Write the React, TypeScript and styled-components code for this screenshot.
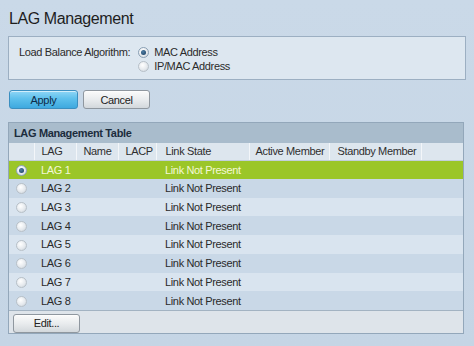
import React from "react";
import styled, { createGlobalStyle } from "styled-components";

const GlobalStyle = createGlobalStyle`
  html, body {
    margin: 0;
    padding: 0;
    background: #c6d6e6;
  }
  body {
    font-family: "Liberation Sans", Arial, sans-serif;
    color: #2b2b2b;
    letter-spacing: -0.35px;
  }
`;

const Page = styled.div`
  width: 474px;
  height: 346px;
  box-sizing: border-box;
  padding: 9px 8px 0 8px;
  background: linear-gradient(180deg, #cad9e8 0%, #c5d5e5 100%);
  overflow: hidden;
`;

const Title = styled.h1`
  margin: 0 0 0 1px;
  font-size: 16px;
  font-weight: normal;
  line-height: 20px;
  letter-spacing: -0.4px;
  color: #1e1e1e;
`;

const SettingsBox = styled.div`
  margin-top: 7px;
  width: 458px;
  height: 44px;
  box-sizing: border-box;
  border: 1px solid #9cafc2;
  background: #dde7f0;
  display: flex;
  padding: 8px 0 0 10px;
  font-size: 11px;
`;

const FieldLabel = styled.div`
  line-height: 14px;
  margin-right: 8px;
`;

const OptionList = styled.div`
  display: flex;
  flex-direction: column;
`;

const OptionRow = styled.label`
  display: flex;
  align-items: center;
  gap: 5px;
  height: 14px;
  line-height: 14px;
`;

const Radio = styled.span<{ $checked?: boolean }>`
  display: inline-block;
  position: relative;
  width: 9px;
  height: 9px;
  border-radius: 50%;
  border: 1px solid ${(p) => (p.$checked ? "#8aa0b4" : "#b7c0c8")};
  background: radial-gradient(circle at 40% 35%, #ffffff 0%, #e6eaee 55%, #c8d0d8 100%);
  flex-shrink: 0;
  vertical-align: middle;

  &::after {
    content: "";
    display: ${(p) => (p.$checked ? "block" : "none")};
    position: absolute;
    left: 2px;
    top: 2px;
    width: 5px;
    height: 5px;
    border-radius: 50%;
    background: radial-gradient(circle at 40% 35%, #4f7fa6 0%, #173a5c 100%);
  }
`;

const ButtonRow = styled.div`
  display: flex;
  gap: 5px;
  margin: 10px 0 0 1px;
`;

const Button = styled.button<{ $primary?: boolean; $w: number }>`
  width: ${(p) => p.$w}px;
  height: 19px;
  box-sizing: border-box;
  padding: 0;
  font-family: "Liberation Sans", Arial, sans-serif;
  font-size: 11px;
  letter-spacing: -0.35px;
  color: ${(p) => (p.$primary ? "#0f2c48" : "#222")};
  border-radius: 3px;
  border: 1px solid ${(p) => (p.$primary ? "#3b8fc0" : "#8f979f")};
  background: ${(p) =>
    p.$primary
      ? "linear-gradient(180deg, #8fd6f6 0%, #5ec0ec 45%, #3ea9df 100%)"
      : "linear-gradient(180deg, #fbfbfb 0%, #e9ecee 50%, #d3d8dc 100%)"};
  box-shadow: inset 0 1px 0 rgba(255, 255, 255, 0.6);
`;

const TablePanel = styled.div`
  margin-top: 13px;
  width: 456px;
  box-sizing: border-box;
  border: 1px solid #93a7ba;
  overflow: hidden;
`;

const TableTitle = styled.div`
  height: 20px;
  line-height: 20px;
  padding-left: 5px;
  background: #a9bccc;
  font-size: 11px;
  font-weight: bold;
  color: #1c2c3c;
`;

const Grid = styled.table`
  width: 100%;
  border-collapse: collapse;
  table-layout: fixed;
  font-size: 11px;
`;

const HeadCell = styled.th<{ $pad?: number }>`
  box-sizing: border-box;
  height: 17px;
  padding: 0 0 0 ${(p) => p.$pad ?? 7}px;
  text-align: left;
  font-weight: normal;
  color: #2e2e2e;
  background: #dde6ee;
  border-right: 1px solid #f3f6f9;
  border-bottom: 1px solid #c2cfdb;
  white-space: nowrap;
  overflow: hidden;

  &:last-child {
    border-right: none;
  }
`;

const Row = styled.tr<{ $selected?: boolean; $alt?: boolean }>`
  height: 18.75px;
  background: ${(p) => (p.$selected ? "#9bc628" : p.$alt ? "#c9d8e7" : "#d9e4ef")};
  color: ${(p) => (p.$selected ? "#f3f8d6" : "#2a2a2a")};
`;

const Cell = styled.td<{ $center?: boolean; $pad?: number }>`
  box-sizing: border-box;
  padding: 0 0 0 ${(p) => (p.$center ? 0 : p.$pad ?? 7)}px;
  text-align: ${(p) => (p.$center ? "center" : "left")};
  white-space: nowrap;
  overflow: hidden;
  line-height: 12px;
`;

const Footer = styled.div`
  height: 23px;
  box-sizing: border-box;
  padding: 2px 0 0 4px;
  background: #dee4ea;
  border-top: 1px solid #a3b3c2;
`;

const columns = [
  { label: "", width: 25, pad: 7 },
  { label: "LAG", width: 42, pad: 7 },
  { label: "Name", width: 42, pad: 7 },
  { label: "LACP", width: 38, pad: 7 },
  { label: "Link State", width: 93, pad: 9 },
  { label: "Active Member", width: 80, pad: 6 },
  { label: "Standby Member", width: 92, pad: 8 },
];

const lags = [1, 2, 3, 4, 5, 6, 7, 8];

export default function App() {
  return (
    <>
      <GlobalStyle />
      <Page>
        <Title>LAG Management</Title>

        <SettingsBox>
          <FieldLabel>Load Balance Algorithm:</FieldLabel>
          <OptionList>
            <OptionRow>
              <Radio $checked />
              <span>MAC Address</span>
            </OptionRow>
            <OptionRow>
              <Radio />
              <span>IP/MAC Address</span>
            </OptionRow>
          </OptionList>
        </SettingsBox>

        <ButtonRow>
          <Button $primary $w={69}>Apply</Button>
          <Button $w={67}>Cancel</Button>
        </ButtonRow>

        <TablePanel>
          <TableTitle>LAG Management Table</TableTitle>
          <Grid>
            <colgroup>
              {columns.map((c) => (
                <col key={c.label || "sel"} style={{ width: c.width }} />
              ))}
              <col />
            </colgroup>
            <thead>
              <tr>
                {columns.map((c) => (
                  <HeadCell key={c.label || "sel"} $pad={c.pad}>
                    {c.label}
                  </HeadCell>
                ))}
                <HeadCell />
              </tr>
            </thead>
            <tbody>
              {lags.map((n) => (
                <Row key={n} $selected={n === 1} $alt={n % 2 === 0}>
                  <Cell $center>
                    <Radio $checked={n === 1} />
                  </Cell>
                  <Cell>LAG {n}</Cell>
                  <Cell />
                  <Cell />
                  <Cell $pad={9}>Link Not Present</Cell>
                  <Cell />
                  <Cell />
                  <Cell />
                </Row>
              ))}
            </tbody>
          </Grid>
          <Footer>
            <Button $w={67}>Edit...</Button>
          </Footer>
        </TablePanel>
      </Page>
    </>
  );
}
